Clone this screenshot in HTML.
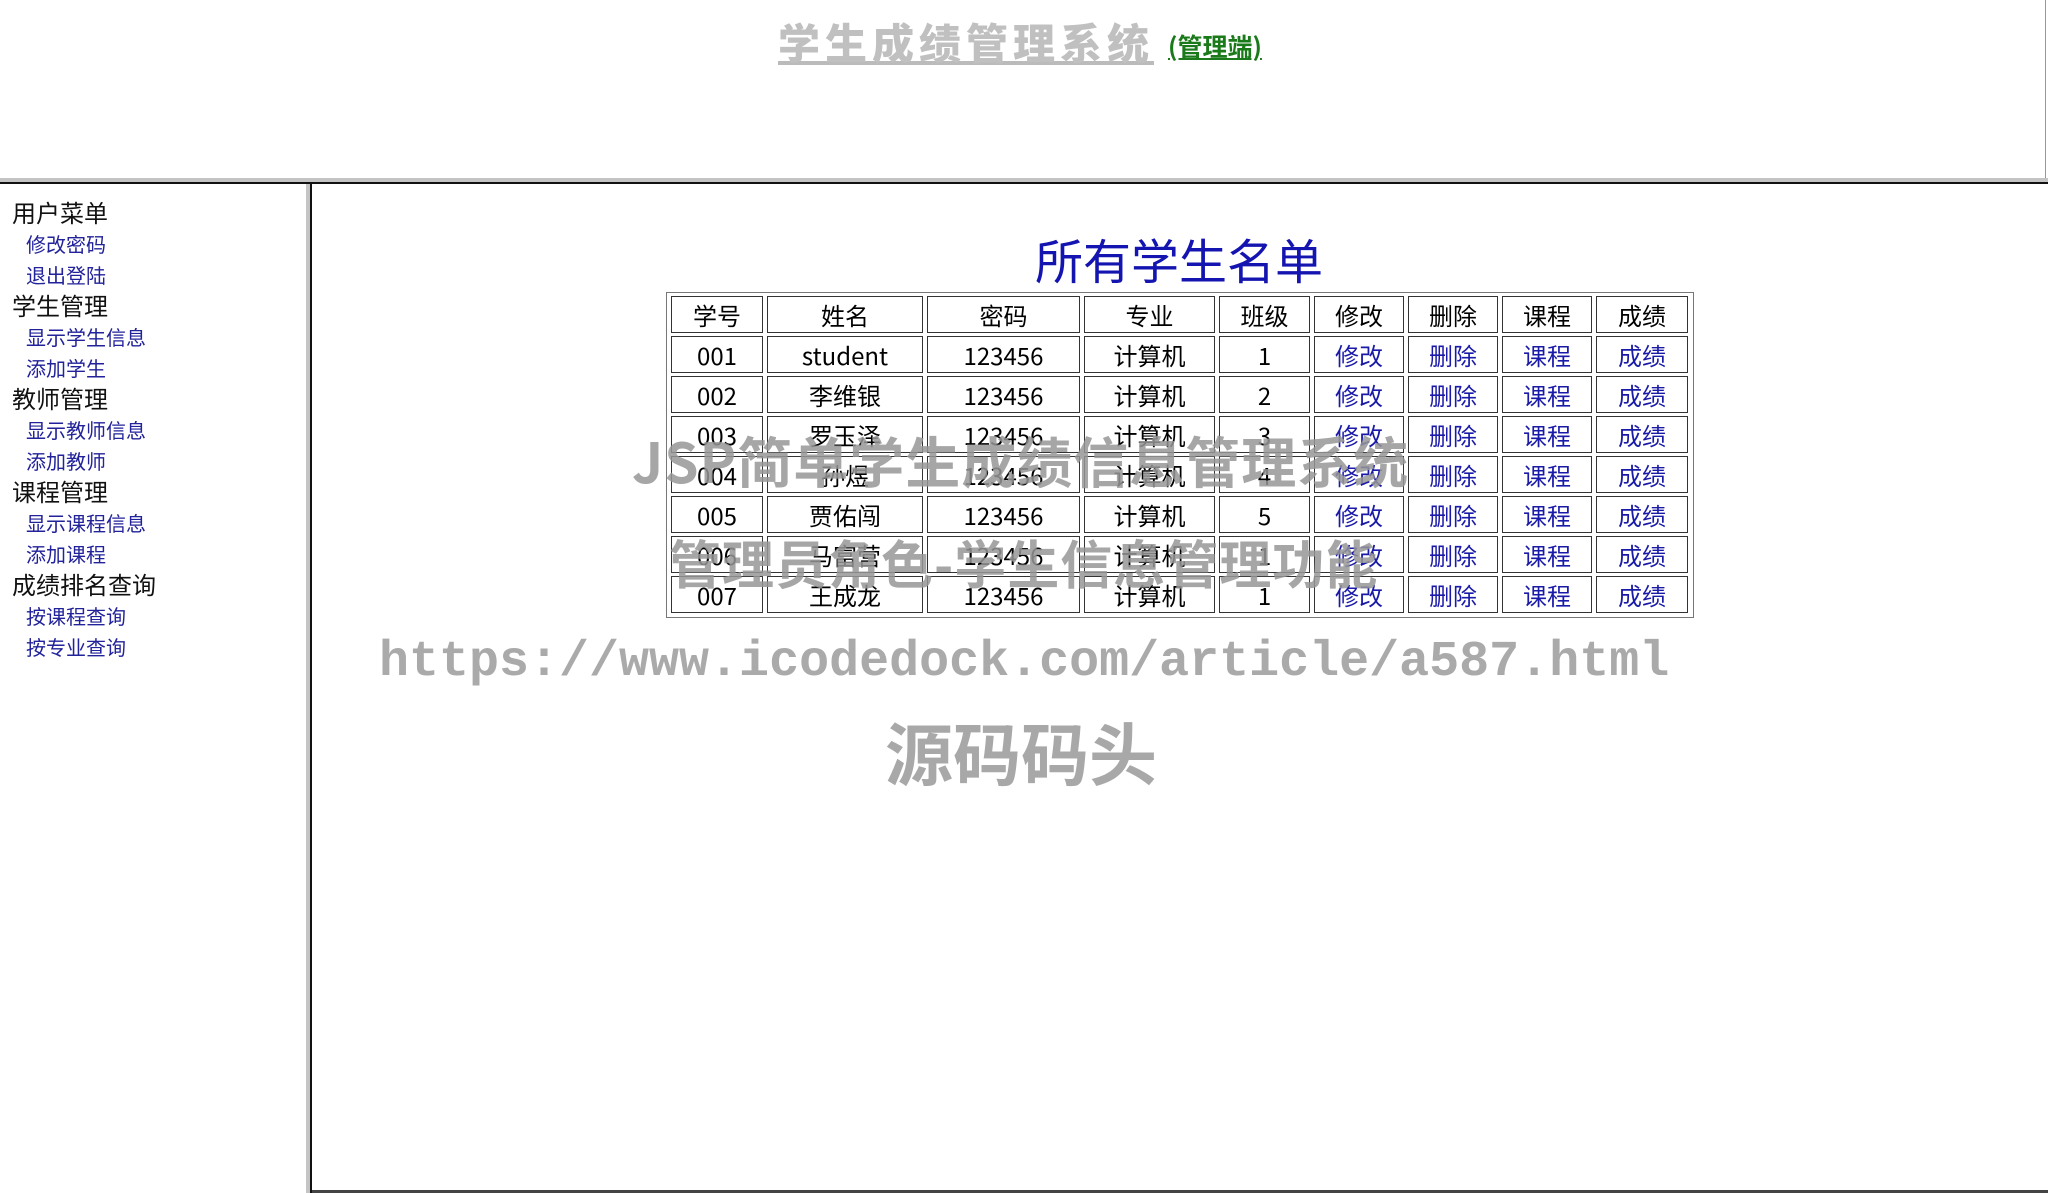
<!DOCTYPE html>
<html><head><meta charset="utf-8">
<style>
html,body{margin:0;padding:0;width:2048px;height:1193px;overflow:hidden;background:#fff;position:relative;font-family:"Liberation Sans","Noto Sans CJK SC",sans-serif;}
.abs{position:absolute;white-space:nowrap;}
.hdr{left:778px;top:12px;font-size:42px;font-weight:900;color:#c0c0c0;text-decoration:underline;text-decoration-color:#bbb;text-decoration-thickness:4px;font-family:"Noto Sans CJK SC","WenQuanYi Zen Hei",sans-serif;letter-spacing:5px;line-height:60px}
.hdr2{left:1168px;top:28px;font-size:25px;font-weight:bold;color:#1a7a1a;text-decoration:underline;font-family:"Noto Sans CJK SC",sans-serif;}
.m1{font-size:24px;color:#111;left:12px;}
.m2{font-size:20px;color:#22229a;left:26px;}
.cell{position:absolute;border:1px solid #333;box-sizing:border-box;height:37px;line-height:35px;text-align:center;font-size:24px;color:#000;font-family:"Noto Sans CJK SC",sans-serif;}
.lk{color:#1a1aa8;}
.wm{color:rgba(150,150,150,0.85);font-weight:bold;font-family:"Noto Sans CJK SC",sans-serif;}
</style></head><body>
<div class="abs hdr">学生成绩管理系统</div>
<div class="abs hdr2">(管理端)</div>
<div class="abs" style="left:2045px;top:0;width:1px;height:180px;background:#999"></div>
<div class="abs" style="left:0;top:178px;width:2048px;height:4px;background:#c4c4c4"></div>
<div class="abs" style="left:0;top:182px;width:2048px;height:2px;background:#111"></div>
<div class="abs" style="left:306px;top:184px;width:4px;height:1009px;background:#c4c4c4"></div>
<div class="abs" style="left:310px;top:184px;width:2px;height:1009px;background:#111"></div>
<div class="abs" style="left:312px;top:1190px;width:1736px;height:3px;background:#444"></div>

<div class="abs m1" style="top:194px">用户菜单</div>
<div class="abs m2" style="top:229px">修改密码</div>
<div class="abs m2" style="top:260px">退出登陆</div>
<div class="abs m1" style="top:287px">学生管理</div>
<div class="abs m2" style="top:322px">显示学生信息</div>
<div class="abs m2" style="top:353px">添加学生</div>
<div class="abs m1" style="top:380px">教师管理</div>
<div class="abs m2" style="top:415px">显示教师信息</div>
<div class="abs m2" style="top:446px">添加教师</div>
<div class="abs m1" style="top:473px">课程管理</div>
<div class="abs m2" style="top:508px">显示课程信息</div>
<div class="abs m2" style="top:539px">添加课程</div>
<div class="abs m1" style="top:566px">成绩排名查询</div>
<div class="abs m2" style="top:601px">按课程查询</div>
<div class="abs m2" style="top:632px">按专业查询</div>

<div class="abs" style="left:1035px;top:225px;font-size:48px;color:#1414b0;font-family:'Noto Sans CJK SC',sans-serif;line-height:66px">所有学生名单</div>
<div class="abs" style="left:666px;top:292px;width:1028px;height:326px;border:1px solid #777;box-sizing:border-box"></div>
<div id="t"></div>
<script>
var xs=[[671,763],[767,923],[927,1080],[1084,1215],[1219,1310],[1314,1404],[1408,1498],[1502,1592],[1596,1688]];
var rows=[["学号","姓名","密码","专业","班级","修改","删除","课程","成绩"]];
var names=["student","李维银","罗玉泽","孙煜","贾佑闯","马富营","王成龙"],cls=["1","2","3","4","5","1","1"];
for(var i=0;i<7;i++)rows.push(["00"+(i+1),names[i],"123456","计算机",cls[i],"修改","删除","课程","成绩"]);
var h="";
for(var r=0;r<8;r++)for(var c=0;c<9;c++){
 var y=296+r*40;
 h+='<div class="cell'+(r>0&&c>4?' lk':'')+'" style="left:'+xs[c][0]+'px;top:'+y+'px;width:'+(xs[c][1]-xs[c][0])+'px">'+rows[r][c]+'</div>';
}
document.getElementById('t').outerHTML=h;
</script>

<div class="abs wm" style="left:632px;top:424px;font-size:55px;line-height:70px;letter-spacing:1px">JSP简单学生成绩信息管理系统</div>
<div class="abs wm" style="left:669px;top:527px;font-size:52px;line-height:70px;letter-spacing:1px">管理员角色-学生信息管理功能</div>
<div class="abs" style="left:379px;top:630px;font-size:50px;line-height:66px;font-weight:bold;color:#aaa;font-family:'Liberation Mono',monospace">https://www.icodedock.com/article/a587.html</div>
<div class="abs wm" style="left:885px;top:708px;font-size:68px;line-height:86px;color:#a8a8a8">源码码头</div>
</body></html>
